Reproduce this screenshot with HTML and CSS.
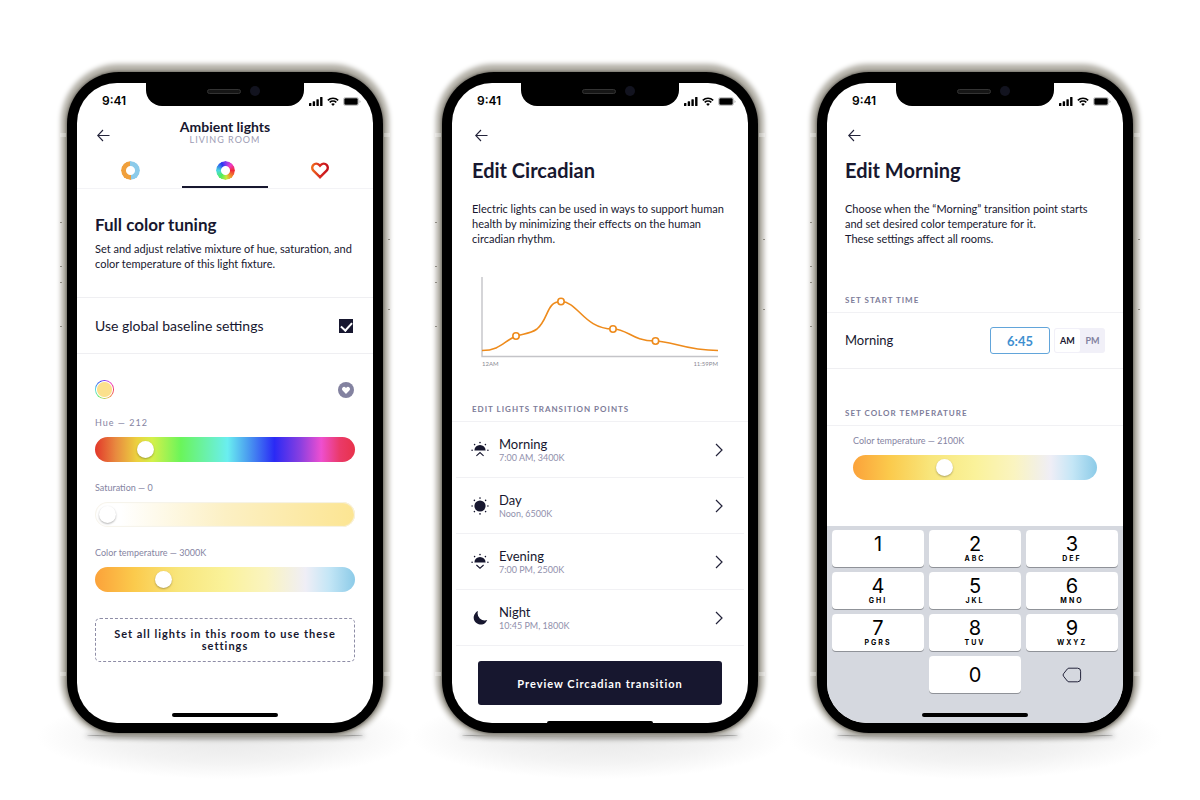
FILE: index.html
```html
<!DOCTYPE html>
<html lang="en">
<head>
    <meta charset="UTF-8">
    <meta name="viewport" content="width=device-width, initial-scale=1.0">
    <title>Ambient lights</title>
    <link rel="stylesheet" href="styles.css">
</head>
<body>
    <!-- shared icons -->
    <svg class="sprite" aria-hidden="true">
        <symbol id="signal" viewBox="0 0 14 9">
            <rect x="0" y="6" width="2.4" height="3" rx=".6"/>
            <rect x="3.7" y="4.2" width="2.4" height="4.8" rx=".6"/>
            <rect x="7.4" y="2.2" width="2.4" height="6.8" rx=".6"/>
            <rect x="11.1" y="0" width="2.4" height="9" rx=".6"/>
        </symbol>
        <symbol id="wifi" viewBox="0 0 12 9">
            <path d="M.8 3.4a7.6 7.6 0 0 1 10.4 0M2.7 5.4a4.9 4.9 0 0 1 6.6 0" fill="none" stroke="#000" stroke-width="1.5"/>
            <path d="M6 9 4.2 7.1a2.7 2.7 0 0 1 3.6 0z"/>
        </symbol>
        <symbol id="battery" viewBox="0 0 18 9">
            <rect x=".5" y=".5" width="15" height="8" rx="2" fill="none" stroke="#aaa" stroke-width=".7"/>
            <rect x="1.3" y="1.3" width="13.4" height="6.4" rx="1.2"/>
            <path d="M16.5 3v3q1-.5 1-1.5t-1-1.5z" fill="#aaa"/>
        </symbol>
        <symbol id="arrow" viewBox="0 0 13 13">
            <path d="M12.5 6.5H.8M6 1 .7 6.5 6 12" fill="none" stroke="#23233a" stroke-width="1.1"/>
        </symbol>
        <symbol id="chevron" viewBox="0 0 8 14">
            <path d="M1 1l6 6-6 6" fill="none" stroke="#23233a" stroke-width="1.2"/>
        </symbol>
        <symbol id="halfsun" viewBox="0 0 18 18">
            <path d="M3.4 9.5a5.6 5.6 0 0 1 11.2 0z"/>
            <g><circle cx="9" cy="1.6" r=".8"/><circle cx="3.6" cy="3.6" r=".8"/><circle cx="14.4" cy="3.6" r=".8"/><circle cx="1.1" cy="9.3" r=".8"/><circle cx="16.9" cy="9.3" r=".8"/></g>
        </symbol>
    </svg>

    <main class="phones">
        <section class="phone">
            <span class="edge"></span>
            <div class="screen">
                <div class="status">
                    <span class="time">9:41</span>
                    <div class="notch"><span class="speaker"></span><span class="camera"></span></div>
                    <div class="signals">
                        <svg width="14" height="9"><use href="#signal"/></svg>
                        <svg width="12" height="9"><use href="#wifi"/></svg>
                        <svg width="18" height="9"><use href="#battery"/></svg>
                    </div>
                </div>

                <header class="appbar">
                    <button class="back" aria-label="Back"><svg width="13" height="13"><use href="#arrow"/></svg></button>
                    <div class="appbar-title">
                        <h1>Ambient lights</h1>
                        <p>LIVING ROOM</p>
                    </div>
                </header>

                <nav class="tabs">
                    <button class="tab" aria-label="White tuning"><span class="ring ring-white"></span></button>
                    <button class="tab active" aria-label="Full color tuning"><span class="ring ring-color"></span></button>
                    <button class="tab" aria-label="Favorites">
                        <svg width="20" height="19" viewBox="0 0 20 19">
                            <defs><linearGradient id="heartfill"><stop offset="0" stop-color="#ef6a1c"/><stop offset=".5" stop-color="#d92a20"/><stop offset="1" stop-color="#c4121c"/></linearGradient></defs>
                            <path d="M10 16.2 3.4 9.6a4.1 4.1 0 0 1 0-5.8 4 4 0 0 1 5.7 0L10 4.8l.9-1a4 4 0 0 1 5.7 0 4.1 4.1 0 0 1 0 5.8z" fill="none" stroke="url(#heartfill)" stroke-width="2.4"/>
                        </svg>
                    </button>
                </nav>

                <div class="intro">
                    <h2>Full color tuning</h2>
                    <p>Set and adjust relative mixture of hue, saturation, and color temperature of this light fixture.</p>
                </div>

                <div class="baseline">
                    <label for="baseline">Use global baseline settings</label>
                    <input type="checkbox" id="baseline" checked>
                </div>

                <div class="mixer">
                    <div class="swatches">
                        <span class="swatch"></span>
                        <button class="fav" aria-label="Add to favorites">
                            <svg width="16" height="16" viewBox="0 0 16 16"><circle cx="8" cy="8" r="8" fill="#8382a0"/><path d="M8 12 4.6 8.4a2.1 2.1 0 0 1 0-3 2 2 0 0 1 2.9 0l.5.5.5-.5a2 2 0 0 1 2.9 0 2.1 2.1 0 0 1 0 3z" fill="#fff"/></svg>
                        </button>
                    </div>
                    <div class="slider">
                        <label class="spaced" for="hue">Hue — 212</label>
                        <input class="hue" type="range" id="hue" min="0" max="100" value="16">
                    </div>
                    <div class="slider">
                        <label for="saturation">Saturation — 0</label>
                        <input class="saturation" type="range" id="saturation" min="0" max="100" value="0">
                    </div>
                    <div class="slider">
                        <label for="temperature">Color temperature — 3000K</label>
                        <input class="temperature" type="range" id="temperature" min="0" max="100" value="24">
                    </div>
                    <button class="apply-all">Set all lights in this room to use these settings</button>
                </div>

                <div class="home"></div>
            </div>
        </section>

        <section class="phone">
            <span class="edge"></span>
            <div class="screen">
                <div class="status">
                    <span class="time">9:41</span>
                    <div class="notch"><span class="speaker"></span><span class="camera"></span></div>
                    <div class="signals">
                        <svg width="14" height="9"><use href="#signal"/></svg>
                        <svg width="12" height="9"><use href="#wifi"/></svg>
                        <svg width="18" height="9"><use href="#battery"/></svg>
                    </div>
                </div>

                <header class="page-head">
                    <button class="back" aria-label="Back"><svg width="13" height="13"><use href="#arrow"/></svg></button>
                    <h1>Edit Circadian</h1>
                    <p>Electric lights can be used in ways to support human health by minimizing their effects on the human circadian rhythm.</p>
                </header>

                <figure class="chart">
                    <svg viewBox="0 0 240 84">
                        <path d="M2 2v79.5h236" fill="none" stroke="#c4c4c8" stroke-width="1.4"/>
                        <g fill="#fff" stroke="#ee8b1c" stroke-width="1.6">
                            <path d="M2 75.5C20 75.5 24 66 36 61C44 58.5 50 59 57 54C69 44 66 26.5 81 26.5C98 26.5 104 54 133 54C148 54 152 66 175 66C192 66 205 75.5 238 75.5" fill="none"/>
                            <circle cx="36" cy="61" r="3.2"/>
                            <circle cx="81" cy="26.5" r="3.2"/>
                            <circle cx="133" cy="54" r="3.2"/>
                            <circle cx="175.5" cy="66" r="3.2"/>
                        </g>
                    </svg>
                    <figcaption><span>12AM</span><span>11:59PM</span></figcaption>
                </figure>

                <h2 class="label">EDIT LIGHTS TRANSITION POINTS</h2>
                <ul class="points">
                    <li><a href="#morning">
                        <svg width="18" height="18" viewBox="0 0 18 18" fill="#17172f"><use href="#halfsun"/><path d="M5.4 14.8 9 11.6l3.6 3.2" fill="none" stroke="#17172f" stroke-width="1.1"/></svg>
                        <span class="point"><b>Morning</b><small>7:00 AM, 3400K</small></span>
                        <svg width="8" height="14"><use href="#chevron"/></svg>
                    </a></li>
                    <li><a href="#day">
                        <svg width="18" height="18" viewBox="0 0 18 18" fill="#17172f"><circle cx="9" cy="9" r="5.6"/><circle cx="9" cy="1.1" r=".8"/><circle cx="9" cy="16.9" r=".8"/><circle cx="1.1" cy="9" r=".8"/><circle cx="16.9" cy="9" r=".8"/><circle cx="3.4" cy="3.4" r=".8"/><circle cx="14.6" cy="3.4" r=".8"/><circle cx="3.4" cy="14.6" r=".8"/><circle cx="14.6" cy="14.6" r=".8"/></svg>
                        <span class="point"><b>Day</b><small>Noon, 6500K</small></span>
                        <svg width="8" height="14"><use href="#chevron"/></svg>
                    </a></li>
                    <li><a href="#evening">
                        <svg width="18" height="18" viewBox="0 0 18 18" fill="#17172f"><use href="#halfsun"/><path d="M5.4 12 9 15.2l3.6-3.2" fill="none" stroke="#17172f" stroke-width="1.1"/></svg>
                        <span class="point"><b>Evening</b><small>7:00 PM, 2500K</small></span>
                        <svg width="8" height="14"><use href="#chevron"/></svg>
                    </a></li>
                    <li><a href="#night">
                        <svg width="18" height="18" viewBox="0 0 18 18" fill="#17172f"><path d="M7 2.1a7 7 0 1 0 9.2 9A7.2 7.2 0 0 1 7 2.1z"/></svg>
                        <span class="point"><b>Night</b><small>10:45 PM, 1800K</small></span>
                        <svg width="8" height="14"><use href="#chevron"/></svg>
                    </a></li>
                </ul>
                <button class="preview">Preview Circadian transition</button>
                <div class="home home-low"></div>
            </div>
        </section>

        <section class="phone">
            <span class="edge"></span>
            <div class="screen">
                <div class="status">
                    <span class="time">9:41</span>
                    <div class="notch"><span class="speaker"></span><span class="camera"></span></div>
                    <div class="signals">
                        <svg width="14" height="9"><use href="#signal"/></svg>
                        <svg width="12" height="9"><use href="#wifi"/></svg>
                        <svg width="18" height="9"><use href="#battery"/></svg>
                    </div>
                </div>

                <header class="page-head narrow">
                    <button class="back" aria-label="Back"><svg width="13" height="13"><use href="#arrow"/></svg></button>
                    <h1>Edit Morning</h1>
                    <p>Choose when the “Morning” transition point starts and set desired color temperature for it.<br>These settings affect all rooms.</p>
                </header>

                <h2 class="label">SET START TIME</h2>
                <div class="start">
                    <label for="start">Morning</label>
                    <input type="text" id="start" value="6:45">
                    <div class="ampm">
                        <input type="radio" name="ampm" id="am" checked><label for="am">AM</label>
                        <input type="radio" name="ampm" id="pm"><label for="pm">PM</label>
                    </div>
                </div>

                <h2 class="label label-temp">SET COLOR TEMPERATURE</h2>
                <div class="slider inset">
                    <label for="morningTemp">Color temperature — 2100K</label>
                    <input class="temperature" type="range" id="morningTemp" min="0" max="100" value="36">
                </div>

                <div class="keypad">
                    <div class="keys">
                        <button>1<small></small></button>
                        <button>2<small>ABC</small></button>
                        <button>3<small>DEF</small></button>
                        <button>4<small>GHI</small></button>
                        <button>5<small>JKL</small></button>
                        <button>6<small>MNO</small></button>
                        <button>7<small>PGRS</small></button>
                        <button>8<small>TUV</small></button>
                        <button>9<small>WXYZ</small></button>
                        <button class="zero">0</button>
                        <button class="delete" aria-label="Delete"><svg width="20" height="16" viewBox="0 0 20 16"><path d="M7 1.2h8.6a3 3 0 0 1 3 3v7.6a3 3 0 0 1-3 3H7q-1 0-1.600-.7L1.500 9.200Q.6 8 1.500 6.800l3.900-4.900Q6 1.200 7 1.200z" fill="none" stroke="#23233a" stroke-width="1"/></svg></button>
                    </div>
                    <div class="home"></div>
                </div>
            </div>
        </section>
    </main>
</body>
</html>
```
FILE: styles.css
```css
* {
    box-sizing: border-box;
}
body {
    margin: 0;
    background-color: #fff;
    color: #17172f;
    font-family: Lato, "Open Sans", sans-serif;
    font-size: 11px;
    line-height: 15px;
}
h1, h2, p, ul, figure {
    margin: 0;
    padding: 0;
}
button {
    padding: 0;
    border: none;
    background: none;
    color: inherit;
    font-family: inherit;
    cursor: pointer;
}
svg {
    display: block;
}
.sprite {
    position: absolute;
    width: 0;
    height: 0;
}

/* phones */
.phones {
    display: grid;
    grid-template-columns: repeat(3, 1fr);
    gap: 59px;
    padding: 72px 67px 67px;
}
.phone {
    position: relative;
    display: flex;
    padding: 11px 10px 10px;
    border-radius: 52px;
    background-color: #000;
    box-shadow: 0 0 3px 1px #6f6c64, 0 -2px 5px 6px #b3b0a7;
}
.phone::before {
    content: "";
    position: absolute;
    z-index: -2;
    left: -30px;
    right: -30px;
    bottom: -46px;
    height: 84px;
    background: radial-gradient(closest-side, #e8e8e8, #f3f3f3 60%, #fff);
}
.phone::after {
    content: "";
    position: absolute;
    z-index: -1;
    left: 20px;
    right: 20px;
    bottom: -4px;
    height: 3px;
    border-radius: 50%;
    background-color: #999;
    box-shadow: 0 0 5px 2px #999;
}
/* antenna bands and side buttons on the frame */
.edge {
    position: absolute;
    top: 0;
    bottom: 0;
    left: -7px;
    right: -7px;
    background:
        linear-gradient(rgba(255, 255, 255, .3) 0 0) 0 61px / 6px 4px no-repeat,
        linear-gradient(rgba(255, 255, 255, .3) 0 0) 100% 61px / 6px 4px no-repeat,
        linear-gradient(rgba(255, 255, 255, .3) 0 0) 0 600px / 6px 4px no-repeat,
        linear-gradient(rgba(255, 255, 255, .3) 0 0) 100% 600px / 6px 4px no-repeat,
        linear-gradient(#8d8a82 0 1px, transparent 1px 44px, #8d8a82 44px) 0 150px / 2px 45px no-repeat,
        linear-gradient(#8d8a82 0 1px, transparent 1px 44px, #8d8a82 44px) 0 210px / 2px 45px no-repeat,
        linear-gradient(#8d8a82 0 1px, transparent 1px 70px, #8d8a82 70px) 100% 167px / 2px 71px no-repeat;
}
.screen {
    flex: 1;
    display: flex;
    flex-direction: column;
    overflow: hidden;
    border-radius: 40px;
    background-color: #fff;
}
.status {
    display: grid;
    grid-template-columns: 1fr 158px 1fr;
    height: 36px;
}
.time {
    padding: 10px 0 0 25px;
    color: #000;
    font: 600 12px/16px Inter, sans-serif;
}
.notch {
    display: flex;
    align-items: center;
    justify-content: flex-end;
    gap: 9px;
    height: 23px;
    padding: 0 44px 7px 0;
    border-radius: 0 0 16px 16px;
    background-color: #000;
}
.speaker {
    width: 34px;
    height: 5px;
    border: 1px solid #333;
    border-radius: 3px;
    background-color: #161616;
}
.camera {
    width: 10px;
    height: 10px;
    border-radius: 50%;
    background-color: #12131f;
}
.signals {
    display: flex;
    justify-content: flex-end;
    gap: 4px;
    padding: 14px 12px 0 0;
}
.home {
    width: 106px;
    height: 4px;
    margin: auto auto 6px;
    border-radius: 2px;
    background-color: #000;
}
.home-low {
    height: 2px;
    margin: auto auto 0;
    border-radius: 2px 2px 0 0;
}

/* headers */
.back {
    display: flex;
    align-items: center;
    width: 24px;
    height: 32px;
}
.appbar {
    display: grid;
    grid-template-columns: 24px 1fr 24px;
    padding: 0 20px 2px;
}
.appbar-title {
    text-align: center;
}
.appbar-title h1 {
    font-size: 14px;
    line-height: 16px;
}
.appbar-title p {
    color: #9c9bb4;
    font-size: 9px;
    line-height: 10px;
    letter-spacing: 1px;
}
.tabs {
    display: grid;
    grid-template-columns: repeat(3, 1fr);
    gap: 9px;
    padding: 0 10px;
    border-bottom: 1px solid #f3f3f6;
}
.tab {
    display: flex;
    align-items: center;
    justify-content: center;
    height: 35px;
    padding-top: 2px;
    border-bottom: 2px solid transparent;
}
.tab.active {
    border-bottom-color: #17172f;
}
.ring {
    width: 19px;
    height: 19px;
    border-radius: 50%;
    -webkit-mask: radial-gradient(circle, transparent 4px, #000 5px);
    mask: radial-gradient(circle, transparent 4px, #000 5px);
}
.ring-white {
    background: conic-gradient(#8ccbea 0 50%, #f0a03c 50%);
}
.ring-color {
    background: conic-gradient(#7a3cf0, #ee3cc8 12%, #f02838 25%, #f0902c 38%, #c8e83c 48%, #50ee58 60%, #48d8e0 75%, #2838f0 92%, #7a3cf0);
}
.page-head {
    padding: 0 20px;
}
.page-head.narrow {
    padding: 0 18px;
}
.page-head .back {
    margin-left: 3px;
}
.page-head h1 {
    margin: 7px 0 19px;
    font-size: 20px;
    line-height: 24px;
}

/* full color tuning */
.intro {
    padding: 26px 17px 26px 18px;
    border-bottom: 1px solid #efeff2;
}
.intro h2 {
    margin-bottom: 6px;
    font-size: 17px;
    line-height: 20px;
}
.baseline {
    display: flex;
    align-items: center;
    justify-content: space-between;
    height: 56px;
    padding: 0 20px 0 18px;
    border-bottom: 1px solid #efeff2;
    font-size: 14px;
}
.baseline input {
    display: flex;
    justify-content: center;
    width: 14px;
    height: 14px;
    margin: 0;
    background-color: #17172f;
    appearance: none;
}
.baseline input:checked::after {
    content: "";
    width: 5px;
    height: 9px;
    margin-top: 1px;
    border: solid #fff;
    border-width: 0 2px 2px 0;
    transform: rotate(42deg);
}
.mixer {
    display: flex;
    flex-direction: column;
    gap: 20px;
    padding: 26px 18px 0;
}
.swatches {
    display: flex;
    align-items: center;
    justify-content: space-between;
    margin-bottom: -2px;
}
.swatch {
    width: 19px;
    height: 19px;
    border-radius: 50%;
    background: radial-gradient(circle, #fbe08c 7px, #fff 8px, transparent 9px), conic-gradient(#7a3cf0, #ee3cc8 12%, #f03850 28%, #f0b04c 42%, #70ee68 60%, #48d8e0 75%, #2838f0 92%, #7a3cf0);
}
.fav {
    border-radius: 50%;
    margin-right: 1px;
}
.slider {
    display: flex;
    flex-direction: column;
    gap: 8px;
}
.slider label {
    color: #8584a2;
    font-size: 9px;
    line-height: 12px;
}
.slider .spaced {
    letter-spacing: 1px;
}
.slider input {
    width: 100%;
    height: 25px;
    margin: 0;
    padding: 0 4px;
    border-radius: 13px;
    appearance: none;
}
.slider input::-webkit-slider-thumb {
    width: 17px;
    height: 17px;
    border-radius: 50%;
    background-color: #fff;
    box-shadow: 0 1px 2px rgba(0, 0, 0, .3);
    appearance: none;
}
.hue {
    background: linear-gradient(90deg, #e2372a, #e88a3f 8%, #ecd03f 16%, #d4f04a 22%, #6af55a 33%, #6aeef0 51%, #4a9bf0 59%, #2a2af5 69%, #8a3fe0 79%, #ee4fd0 87%, #ea3a6a 94%, #e8324a);
}
.saturation {
    background: linear-gradient(90deg, #fff 10%, #fcf0c4 50%, #fce592);
    box-shadow: inset 0 0 1px 1px #f6f3ea;
}
.temperature {
    background: linear-gradient(90deg, #fba23a, #fbca4c 15%, #f8e67c 32%, #faf29a 50%, #faf4c0 66%, #efeef6 81%, #c4e6f6 90%, #8ccbe8);
}
.apply-all {
    height: 44px;
    margin-top: 6px;
    padding: 0 14px;
    border: 1px dashed #8e8da6;
    border-radius: 5px;
    font-size: 11px;
    font-weight: bold;
    line-height: 12px;
    letter-spacing: 1px;
}

/* circadian */
.chart {
    padding: 29px 28px 0;
}
.chart svg {
    width: 100%;
}
.chart figcaption {
    display: flex;
    justify-content: space-between;
    padding: 0 2px;
    color: #8a8a94;
    font-size: 6px;
    line-height: 9px;
}
.label {
    padding: 0 20px 6px;
    border-bottom: 1px solid #f1f1f4;
    color: #7d7c99;
    font-size: 8px;
    line-height: 12px;
    letter-spacing: 1px;
}
.chart + .label {
    margin: 35px 0 0;
}
.points {
    padding: 0 4px;
    list-style: none;
}
.points a {
    display: flex;
    align-items: center;
    height: 56px;
    padding: 0 21px 0 15px;
    border-bottom: 1px solid #f1f1f4;
    color: inherit;
    text-decoration: none;
}
.point {
    flex: 1;
    padding: 2px 0 0 10px;
}
.point b, .point small {
    display: block;
}
.point b {
    font-size: 13px;
    font-weight: normal;
}
.point small {
    color: #9190ac;
    font-size: 9px;
    line-height: 12px;
}
.preview {
    height: 44px;
    margin: 15px 26px 16px;
    border-radius: 3px;
    background-color: #17172f;
    color: #fff;
    font-size: 11px;
    font-weight: bold;
    letter-spacing: 1px;
}

/* morning */
.narrow + .label, .label-temp {
    padding: 0 18px 6px;
}
.narrow + .label {
    margin-top: 48px;
}
.label-temp {
    margin-top: 38px;
}
.start {
    display: flex;
    align-items: center;
    gap: 4px;
    height: 56px;
    padding: 0 18px;
    border-bottom: 1px solid #efeff2;
}
.start > label {
    flex: 1;
    font-size: 13px;
}
.start > input {
    width: 60px;
    height: 27px;
    padding: 0;
    border: 1px solid #62a5da;
    border-radius: 3px;
    color: #3e8fd0;
    font: bold 13px Lato, sans-serif;
    text-align: center;
}
.ampm {
    display: flex;
    border-radius: 3px;
    background-color: #f1f0f8;
}
.ampm input {
    position: absolute;
    opacity: 0;
}
.ampm label {
    width: 25px;
    margin: 1px 0;
    border-radius: 2px;
    color: #8382a0;
    font-size: 9px;
    font-weight: bold;
    line-height: 23px;
    text-align: center;
}
.ampm input:checked + label {
    margin-left: 1px;
    background-color: #fff;
    color: #17172f;
}
.inset {
    padding: 9px 26px 0;
}
.keypad {
    margin-top: auto;
    padding: 4px 5px 0;
    background-color: #d5d8df;
}
.keys {
    display: grid;
    grid-template-columns: repeat(3, 1fr);
    gap: 5px;
    margin-bottom: 20px;
}
.keys button {
    height: 37px;
    border-radius: 4px;
    background-color: #fff;
    box-shadow: 0 1px 0 #8f9298;
    color: #000;
    font: 20px/20px Inter, sans-serif;
}
.keys small {
    display: block;
    height: 9px;
    font-size: 7px;
    font-weight: bold;
    line-height: 9px;
    letter-spacing: 2px;
}
.keys .zero {
    grid-column: 2;
}
.keys .delete {
    display: flex;
    align-items: center;
    justify-content: center;
    background: none;
    box-shadow: none;
}
```
